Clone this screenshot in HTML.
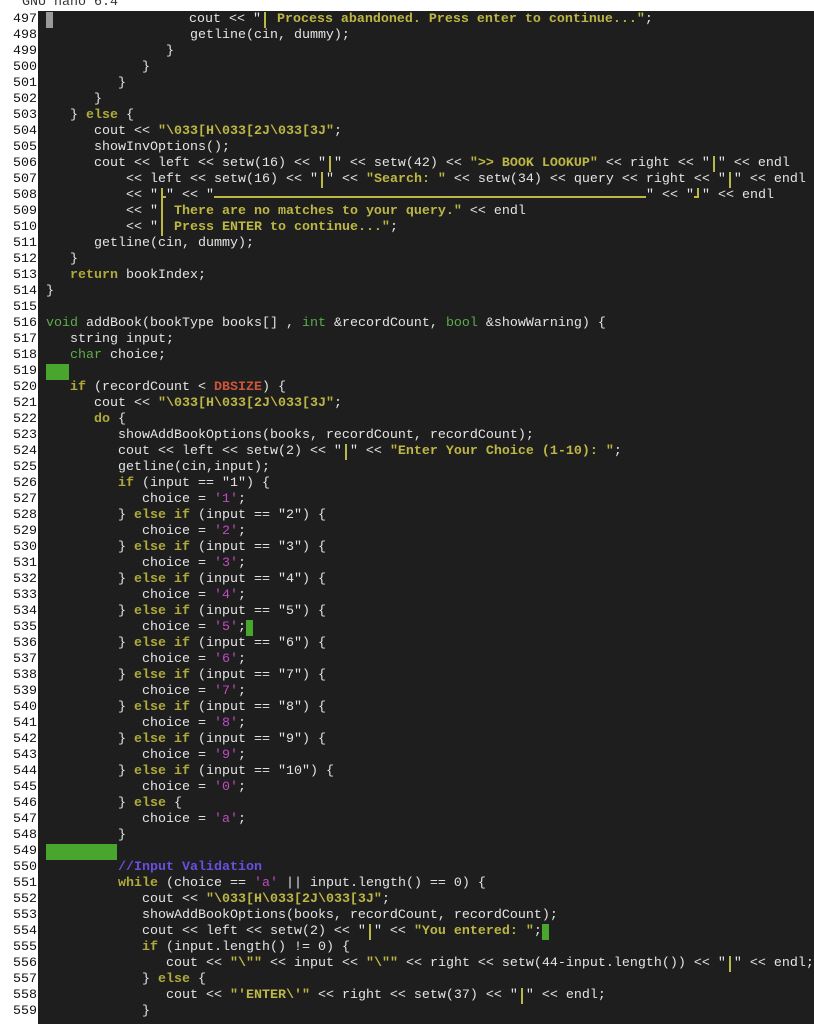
<!DOCTYPE html>
<html><head><meta charset="utf-8"><style>
*{margin:0;padding:0}
html,body{width:814px;height:1024px;overflow:hidden;background:#1e1e1e}
#top{position:absolute;left:0;top:0;width:814px;height:11px;background:#fff;overflow:hidden}
#top span{position:absolute;left:22px;top:-5px;font:13.33px/16px "Liberation Mono",monospace;color:#333}
#gut{position:absolute;left:0;top:11px;width:38px;height:1013px;background:#fff}
#nums{position:absolute;left:0;top:12px;width:37px;text-align:right;font:13.33px/16px "Liberation Mono",monospace;color:#111;white-space:pre}
pre{position:absolute;left:46px;top:12px;font:13.33px/16px "Liberation Mono",monospace;color:#e4e4e4;white-space:pre}
.k{color:#b0aa3a;font-weight:bold}
.s{color:#bdb744;font-weight:bold}
.t{color:#5aad48}
.r{color:#cc553a;font-weight:bold}
.m{color:#c24bc4}
.c{color:#6a4ee2;font-weight:bold}
.v{display:inline-block;width:8px;height:16px;vertical-align:top;background:linear-gradient(90deg,transparent 3px,#bdb744 3px,#bdb744 5px,transparent 5px)}
.tl{display:inline-block;width:8px;height:16px;vertical-align:top;background:linear-gradient(90deg,transparent 3px,#bdb744 3px,#bdb744 5px,transparent 5px),linear-gradient(180deg,transparent 8px,#bdb744 8px,#bdb744 10px,transparent 10px) 4px 0/4px 16px no-repeat}
.hl{display:inline-block;height:16px;vertical-align:top;background:linear-gradient(180deg,transparent 8px,#bdb744 8px,#bdb744 10px,transparent 10px)}
.br{display:inline-block;width:8px;height:16px;vertical-align:top;background:linear-gradient(90deg,transparent 3px,#bdb744 3px,#bdb744 5px,transparent 5px) 0 0/8px 10px no-repeat,linear-gradient(180deg,transparent 8px,#bdb744 8px,#bdb744 10px,transparent 10px) 0 0/4px 16px no-repeat}
.g{display:inline-block;height:16px;vertical-align:top;background:#4aa52e}
.gr{display:inline-block;width:7px;height:16px;vertical-align:top;background:#9a9a9a}
</style></head><body>
<div id="top"><span>GNU nano 6.4</span></div>
<div id="gut"></div>
<div id="nums">497
498
499
500
501
502
503
504
505
506
507
508
509
510
511
512
513
514
515
516
517
518
519
520
521
522
523
524
525
526
527
528
529
530
531
532
533
534
535
536
537
538
539
540
541
542
543
544
545
546
547
548
549
550
551
552
553
554
555
556
557
558
559</div>
<pre><span class="gr"></span>                 cout &lt;&lt; "<span class="v"></span><span class="s"> Process abandoned. Press enter to continue..."</span>;
                  getline(cin, dummy);
               }
            }
         }
      }
   } <span class="k">else</span> {
      cout &lt;&lt; <span class="s">"\033[H\033[2J\033[3J"</span>;
      showInvOptions();
      cout &lt;&lt; left &lt;&lt; setw(16) &lt;&lt; "<span class="v"></span>" &lt;&lt; setw(42) &lt;&lt; <span class="s">"&gt;&gt; BOOK LOOKUP"</span> &lt;&lt; right &lt;&lt; "<span class="v"></span>" &lt;&lt; endl
          &lt;&lt; left &lt;&lt; setw(16) &lt;&lt; "<span class="v"></span>" &lt;&lt; <span class="s">"Search: "</span> &lt;&lt; setw(34) &lt;&lt; query &lt;&lt; right &lt;&lt; "<span class="v"></span>" &lt;&lt; endl
          &lt;&lt; "<span class="tl"></span>" &lt;&lt; "<span class="hl" style="width:432px"></span>" &lt;&lt; "<span class="br"></span>" &lt;&lt; endl
          &lt;&lt; "<span class="v"></span><span class="s"> There are no matches to your query."</span> &lt;&lt; endl
          &lt;&lt; "<span class="v"></span><span class="s"> Press ENTER to continue..."</span>;
      getline(cin, dummy);
   }
   <span class="k">return</span> bookIndex;
}

<span class="t">void</span> addBook(bookType books[] , <span class="t">int</span> &amp;recordCount, <span class="t">bool</span> &amp;showWarning) {
   string input;
   <span class="t">char</span> choice;
<span class="g" style="width:23px"></span>
   <span class="k">if</span> (recordCount &lt; <span class="r">DBSIZE</span>) {
      cout &lt;&lt; <span class="s">"\033[H\033[2J\033[3J"</span>;
      <span class="k">do</span> {
         showAddBookOptions(books, recordCount, recordCount);
         cout &lt;&lt; left &lt;&lt; setw(2) &lt;&lt; "<span class="v"></span>" &lt;&lt; <span class="s">"Enter Your Choice (1-10): "</span>;
         getline(cin,input);
         <span class="k">if</span> (input == "1") {
            choice = <span class="m">'1'</span>;
         } <span class="k">else if</span> (input == "2") {
            choice = <span class="m">'2'</span>;
         } <span class="k">else if</span> (input == "3") {
            choice = <span class="m">'3'</span>;
         } <span class="k">else if</span> (input == "4") {
            choice = <span class="m">'4'</span>;
         } <span class="k">else if</span> (input == "5") {
            choice = <span class="m">'5'</span>;<span class="g" style="width:7px"></span>
         } <span class="k">else if</span> (input == "6") {
            choice = <span class="m">'6'</span>;
         } <span class="k">else if</span> (input == "7") {
            choice = <span class="m">'7'</span>;
         } <span class="k">else if</span> (input == "8") {
            choice = <span class="m">'8'</span>;
         } <span class="k">else if</span> (input == "9") {
            choice = <span class="m">'9'</span>;
         } <span class="k">else if</span> (input == "10") {
            choice = <span class="m">'0'</span>;
         } <span class="k">else</span> {
            choice = <span class="m">'a'</span>;
         }
<span class="g" style="width:71px"></span>
         <span class="c">//Input Validation</span>
         <span class="k">while</span> (choice == <span class="m">'a'</span> || input.length() == 0) {
            cout &lt;&lt; <span class="s">"\033[H\033[2J\033[3J"</span>;
            showAddBookOptions(books, recordCount, recordCount);
            cout &lt;&lt; left &lt;&lt; setw(2) &lt;&lt; "<span class="v"></span>" &lt;&lt; <span class="s">"You entered: "</span>;<span class="g" style="width:7px"></span>
            <span class="k">if</span> (input.length() != 0) {
               cout &lt;&lt; <span class="s">"\""</span> &lt;&lt; input &lt;&lt; <span class="s">"\""</span> &lt;&lt; right &lt;&lt; setw(44-input.length()) &lt;&lt; "<span class="v"></span>" &lt;&lt; endl;
            } <span class="k">else</span> {
               cout &lt;&lt; <span class="s">"'ENTER\'"</span> &lt;&lt; right &lt;&lt; setw(37) &lt;&lt; "<span class="v"></span>" &lt;&lt; endl;
            }</pre>
</body></html>
